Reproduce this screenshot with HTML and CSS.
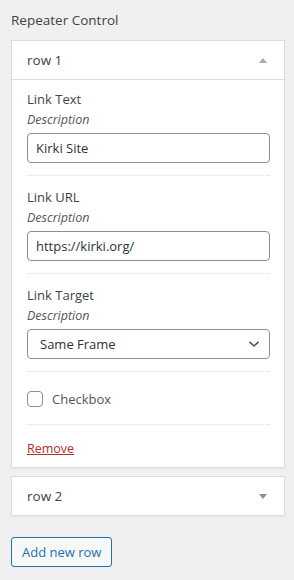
FILE: index.html
```html
<!DOCTYPE html>
<html lang="en">
<head>
  <meta charset="UTF-8" />
  <meta name="viewport" content="width=device-width, initial-scale=1.0" />
  <title>Repeater Control</title>
  <link rel="stylesheet" href="styles.css">
</head>
<body>
  <div class="control">
    <span class="control-title">Repeater Control</span>

    <div class="repeater-row open">
      <div class="row-header">
        <span>row 1</span>
        <span class="toggle up"></span>
      </div>
      <div class="row-content">
        <div class="field">
          <label class="field-label">Link Text</label>
          <span class="description">Description</span>
          <input type="text" value="Kirki Site" />
        </div>
        <div class="field">
          <label class="field-label">Link URL</label>
          <span class="description">Description</span>
          <input type="text" value="https://kirki.org/" />
        </div>
        <div class="field">
          <label class="field-label">Link Target</label>
          <span class="description">Description</span>
          <div class="select-wrap">
            <select>
              <option>Same Frame</option>
              <option>New Window</option>
            </select>
            <svg class="chevron" width="12" height="8" viewBox="0 0 12 8">
              <path d="M1.5 1.8 L6 6 L10.5 1.8" fill="none" stroke="#50575e" stroke-width="1.6" />
            </svg>
          </div>
        </div>
        <div class="field checkbox-field">
          <label class="checkbox-label">
            <input type="checkbox" />
            <span>Checkbox</span>
          </label>
        </div>
        <div class="row-actions">
          <a href="#" class="remove">Remove</a>
        </div>
      </div>
    </div>

    <div class="repeater-row">
      <div class="row-header">
        <span>row 2</span>
        <span class="toggle down"></span>
      </div>
    </div>

    <button class="add-row">Add new row</button>
  </div>
</body>
</html>
```

FILE: styles.css
```css
body {
  margin: 0;
  background: #f0f0f1;
  font-family: 'Open Sans', sans-serif;
  color: #3c434a;
}

.control {
  display: flex;
  flex-direction: column;
  align-items: stretch;
  padding: 9px 9px 0 11px;
}

.control-title {
  font-size: 13.5px;
  line-height: 22px;
  color: #3c434a;
  margin-bottom: 9px;
}

.repeater-row {
  background: #fff;
  border: 1px solid #dcdcde;
  box-shadow: 0 1px 1px rgba(0,0,0,0.04);
  margin-bottom: 8px;
}

.row-header {
  display: flex;
  justify-content: space-between;
  align-items: center;
  height: 38px;
  padding: 0 17px 0 15px;
  font-size: 13.5px;
  color: #3c434a;
}

.open .row-header {
  border-bottom: 1px solid #dcdcde;
}

.toggle {
  width: 0;
  height: 0;
  border-left: 4px solid transparent;
  border-right: 4px solid transparent;
}

.toggle.up {
  border-bottom: 5px solid #a7aaad;
}

.toggle.down {
  border-top: 5px solid #8c8f94;
}

.row-content {
  padding: 0 14px 0 15px;
}

.field {
  display: flex;
  flex-direction: column;
  padding: 11px 0 12px;
  border-bottom: 1px dotted #dcdcde;
}

.field:first-child {
  padding-top: 9px;
}

.field-label {
  font-size: 13px;
  line-height: 20px;
  color: #3c434a;
}

.description {
  font-size: 12.5px;
  font-style: italic;
  line-height: 20px;
  color: #50575e;
  margin: 1px 0 3px;
}

input[type="text"],
select {
  box-sizing: border-box;
  width: 100%;
  height: 30px;
  margin: 0;
  border: 1px solid #8c8f94;
  border-radius: 4px;
  background: #fff;
  font-family: 'Open Sans', sans-serif;
  font-size: 13px;
  color: #2c3338;
  padding: 0 8px;
}

.select-wrap {
  position: relative;
}

select {
  appearance: none;
  -webkit-appearance: none;
  padding: 0 24px 0 12px;
}

.chevron {
  position: absolute;
  right: 10px;
  top: 11px;
  pointer-events: none;
}

.checkbox-field {
  padding: 17px 0 15px;
}

.checkbox-label {
  display: flex;
  align-items: center;
  gap: 9px;
  font-size: 13px;
  line-height: 20px;
  color: #50575e;
}

.checkbox-label input {
  appearance: none;
  -webkit-appearance: none;
  width: 16px;
  height: 16px;
  margin: 0;
  border: 1px solid #8c8f94;
  border-radius: 4px;
  background: #fff;
}

.row-actions {
  padding: 12px 0 8px;
  line-height: 20px;
}

.remove {
  font-size: 12.5px;
  color: #b32d2e;
  text-decoration: underline;
}

.add-row {
  align-self: flex-start;
  margin-top: 13px;
  height: 30px;
  padding: 0 10px;
  border: 1px solid #2271b1;
  border-radius: 3px;
  background: #f6f7f7;
  color: #2271b1;
  font-family: 'Open Sans', sans-serif;
  font-size: 13px;
}
```
